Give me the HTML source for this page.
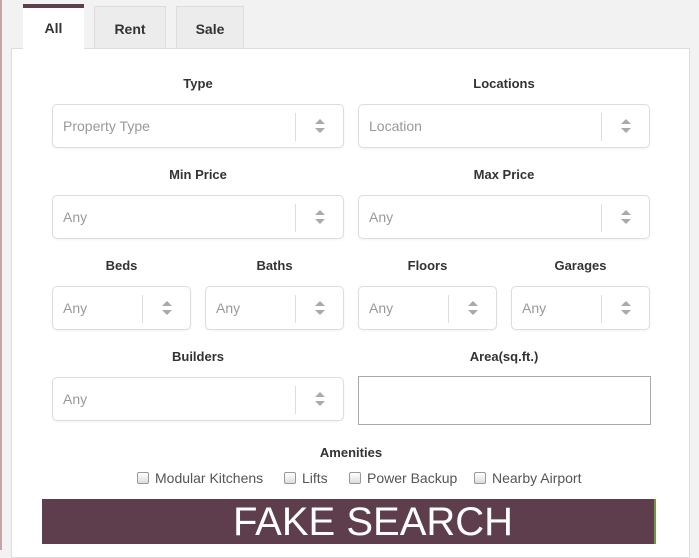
<!DOCTYPE html>
<html><head><style>
*{box-sizing:border-box;margin:0;padding:0}
body{width:699px;height:550px;background:#f2f2f2;font-family:"Liberation Sans",sans-serif;position:relative;overflow:hidden}
.abs{position:absolute}
.tab{position:absolute;font-weight:bold;font-size:14px;color:#333;text-align:center;line-height:44px}
.panel{position:absolute;left:11px;top:48px;width:679px;height:510px;background:#fff;border:1px solid #ddd}
.lbl{position:absolute;font-weight:bold;font-size:13px;color:#333;text-align:center}
.sel{position:absolute;border:1px solid #ddd;border-radius:5px;background:#fff;height:44px;box-shadow:0 1px 2px rgba(0,0,0,.05)}
.sel span{position:absolute;left:10px;top:13px;font-size:14px;color:#999}
.sel i{position:absolute;right:47px;top:8px;width:1px;height:28px;background:#ddd}
.sel b{position:absolute;right:18px;top:14px;width:10px;height:16px}
.sel b:before{content:"";position:absolute;left:0;top:0;border-left:5px solid transparent;border-right:5px solid transparent;border-bottom:5px solid #aaa}
.sel b:after{content:"";position:absolute;left:0;top:9px;border-left:5px solid transparent;border-right:5px solid transparent;border-top:5px solid #aaa}
.cbw{position:absolute;top:470px;font-size:14px;color:#555;white-space:nowrap}
.cb{display:inline-block;width:12px;height:12px;border:1px solid #999;border-radius:2px;background:linear-gradient(#fff,#ddd);vertical-align:-1px;margin-right:6px}
</style></head><body>
<div class="abs" style="left:0;top:0;width:2px;height:550px;background:#c9a3a3"></div>
<div class="panel"></div>
<div class="tab" style="left:23px;top:4px;width:61px;height:45px;background:#fff;border-top:4px solid #5e3d4d;line-height:41px">All</div>
<div class="tab" style="left:94px;top:6px;width:72px;height:42px;background:#ececec;border:1px solid #ddd;border-bottom:none">Rent</div>
<div class="tab" style="left:176px;top:6px;width:68px;height:42px;background:#ececec;border:1px solid #ddd;border-bottom:none">Sale</div>

<div class="lbl" style="left:52px;width:292px;top:76px">Type</div>
<div class="lbl" style="left:358px;width:292px;top:76px">Locations</div>
<div class="sel" style="left:52px;top:104px;width:292px"><span>Property Type</span><i></i><b></b></div>
<div class="sel" style="left:358px;top:104px;width:292px"><span>Location</span><i></i><b></b></div>

<div class="lbl" style="left:52px;width:292px;top:167px">Min Price</div>
<div class="lbl" style="left:358px;width:292px;top:167px">Max Price</div>
<div class="sel" style="left:52px;top:195px;width:292px"><span>Any</span><i></i><b></b></div>
<div class="sel" style="left:358px;top:195px;width:292px"><span>Any</span><i></i><b></b></div>

<div class="lbl" style="left:52px;width:139px;top:258px">Beds</div>
<div class="lbl" style="left:205px;width:139px;top:258px">Baths</div>
<div class="lbl" style="left:358px;width:139px;top:258px">Floors</div>
<div class="lbl" style="left:511px;width:139px;top:258px">Garages</div>
<div class="sel" style="left:52px;top:286px;width:139px"><span>Any</span><i></i><b></b></div>
<div class="sel" style="left:205px;top:286px;width:139px"><span>Any</span><i></i><b></b></div>
<div class="sel" style="left:358px;top:286px;width:139px"><span>Any</span><i></i><b></b></div>
<div class="sel" style="left:511px;top:286px;width:139px"><span>Any</span><i></i><b></b></div>

<div class="lbl" style="left:52px;width:292px;top:349px">Builders</div>
<div class="lbl" style="left:358px;width:292px;top:349px">Area(sq.ft.)</div>
<div class="sel" style="left:52px;top:377px;width:292px"><span>Any</span><i></i><b></b></div>
<div class="abs" style="left:358px;top:376px;width:293px;height:49px;border:1px solid #aaa;background:#fff"></div>

<div class="lbl" style="left:0;width:699px;top:445px;padding-left:3px">Amenities</div>
<div class="cbw" style="left:137px"><span class="cb"></span>Modular Kitchens</div>
<div class="cbw" style="left:284px"><span class="cb"></span>Lifts</div>
<div class="cbw" style="left:349px"><span class="cb"></span>Power Backup</div>
<div class="cbw" style="left:474px"><span class="cb"></span>Nearby Airport</div>

<div class="abs" style="left:42px;top:499px;width:614px;height:45px;background:#5e3d4d;border-right:2px solid #6a9a3a;color:#fff;font-size:40px;line-height:46px;text-align:center;padding-left:50px">FAKE SEARCH</div>
</body></html>
